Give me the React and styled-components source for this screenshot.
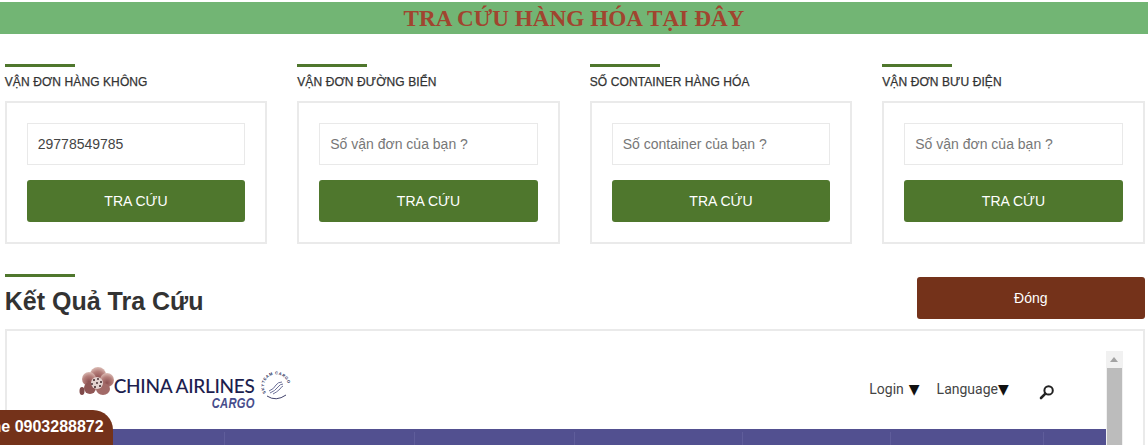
import styled, { createGlobalStyle } from "styled-components";

const GlobalStyle = createGlobalStyle`
  html, body {
    margin: 0;
    padding: 0;
    height: 445px;
    overflow: hidden;
    background: #fff;
    font-family: "Liberation Sans", Arial, sans-serif;
  }
  * { box-sizing: border-box; }
`;

const Page = styled.main`
  width: 1148px;
  height: 445px;
  padding-top: 2px;
  overflow: hidden;
`;

const Banner = styled.h2`
  margin: 0;
  height: 32px;
  background: #72b574;
  color: #a0452f;
  font: bold 23.2px/32px "Liberation Serif", serif;
  text-align: center;
`;

const Content = styled.div`
  padding: 30px 3.25px 0 4.75px;
`;

const SearchGrid = styled.section`
  display: grid;
  grid-template-columns: repeat(4, 1fr);
  column-gap: 30px;
`;

const Accent = styled.div`
  width: 70px;
  height: 3px;
  background: #4f772d;
`;

const ColumnLabel = styled.h4`
  margin: 7px 0 0;
  height: 27px;
  color: #333;
  font-size: 12px;
  font-weight: normal;
  line-height: 16px;
  letter-spacing: 0.1px;
  -webkit-text-stroke: 0.25px #333;
`;

const SearchBox = styled.div`
  height: 143px;
  border: 2px solid #eaeaea;
  padding: 20px 20px 0;
  display: flex;
  flex-direction: column;
  gap: 15px;
`;

const TrackInput = styled.input`
  height: 42px;
  width: 100%;
  border: 1px solid #e9e9e9;
  padding: 0 10px;
  font: 14px "Liberation Sans", Arial, sans-serif;
  color: #444;
  outline: none;
  &::placeholder { color: #777; opacity: 1; }
`;

const TrackButton = styled.button`
  height: 42px;
  width: 100%;
  border: 0;
  border-radius: 3px;
  background: #4f772d;
  color: #fff;
  font: 14px "Liberation Sans", Arial, sans-serif;
`;

const ResultHead = styled.div`
  display: flex;
  justify-content: space-between;
  margin-top: 30px;
  height: 55px;
`;

const ResultTitle = styled.h2`
  margin: 9px 0 0;
  color: #333;
  font-size: 25px;
  line-height: 30px;
  font-weight: bold;
`;

const CloseButton = styled.button`
  width: 228px;
  height: 42px;
  margin-top: 3px;
  border: 0;
  border-radius: 3px;
  background: #74321a;
  color: #fff;
  font: 14px "Liberation Sans", Arial, sans-serif;
`;

const ResultFrame = styled.div`
  height: 200px;
  border: 2px solid #eaeaea;
  padding: 20px 20px 0 0;
  display: flex;
`;

const FrameDoc = styled.div`
  flex: 1;
  min-width: 0;
`;

const DocHeader = styled.div`
  height: 78px;
  display: flex;
  justify-content: space-between;
  padding: 0 51px 0 72px;
`;

const Logo = styled.div`
  display: flex;
  align-items: flex-start;
  margin-top: 16px;
`;

const LogoText = styled.div`
  display: flex;
  flex-direction: column;
  align-items: flex-end;
  margin-left: -1px;
  padding-top: 9px;
`;

const AirlineName = styled.span`
  color: #1c1e4e;
  font: 500 19px/20px Lato, sans-serif;
  letter-spacing: -0.3px;
`;

const CargoName = styled.span`
  color: #474d8c;
  font: italic bold 14px/15px "Liberation Sans", Arial, sans-serif;
  letter-spacing: 0.3px;
  transform: scaleX(0.8);
  transform-origin: right center;
`;

const SealSlot = styled.div`
  margin: 4px 0 0 6px;
`;

const DocNav = styled.nav`
  display: flex;
  align-items: center;
  height: 36px;
  margin-top: 20px;
  color: #444;
  font: 14px Roboto, sans-serif;
`;

const NavItem = styled.span`
  margin-right: ${(p) => p.$gap}px;
`;

const Arrow = styled.span`
  color: #111;
  font: 14px "DejaVu Sans", sans-serif;
  margin-left: ${(p) => p.$gap}px;
`;

const GlassSlot = styled.span`
  display: flex;
  margin-top: 6px;
`;

const Menubar = styled.div`
  height: 20px;
  background: #525090;
  display: flex;
`;

const MenuCell = styled.div`
  width: ${(p) => p.$width}px;
  margin-top: 3px;
  border-right: 1px solid #5f5d9b;
  flex-shrink: 0;
`;

const Scrollbar = styled.div`
  width: 17px;
  background: #f1f1f1;
  display: flex;
  flex-direction: column;
  align-items: center;
`;

const ScrollUp = styled.div`
  width: 17px;
  height: 17px;
  display: flex;
  align-items: center;
  justify-content: center;
  &::before {
    content: "";
    border-left: 4px solid transparent;
    border-right: 4px solid transparent;
    border-bottom: 5px solid #a3a3a3;
  }
`;

const ScrollThumb = styled.div`
  width: 15px;
  flex: 1;
  background: #bcbcbc;
`;

const HotlineBadge = styled.div`
  position: fixed;
  left: -58px;
  bottom: 0;
  height: 35px;
  width: 171px;
  padding-left: 14px;
  border-radius: 0 20px 0 0;
  background: #74321a;
  color: #fff;
  font: bold 16px/33px "Liberation Sans", Arial, sans-serif;
  white-space: nowrap;
`;

const FlowerLogo = () => (
  <svg width="36" height="32" viewBox="0 0 36 32">
    <defs>
      <radialGradient id="petal" cx="50%" cy="70%" r="70%">
        <stop offset="0%" stopColor="#8c4f50" />
        <stop offset="60%" stopColor="#b57f7b" />
        <stop offset="100%" stopColor="#dcbdb6" />
      </radialGradient>
    </defs>
    <ellipse cx="19" cy="8" rx="8" ry="8" fill="url(#petal)" />
    <ellipse cx="10" cy="12" rx="7" ry="7" fill="url(#petal)" />
    <ellipse cx="28" cy="13" rx="7" ry="7" fill="url(#petal)" />
    <ellipse cx="11" cy="21" rx="6" ry="6" fill="#8f5655" />
    <ellipse cx="24" cy="22" rx="7" ry="6" fill="#a26a68" />
    <circle cx="18" cy="16" r="6" fill="#e3d2cf" />
    <g fill="#3a2226">
      <circle cx="15" cy="13" r="1" />
      <circle cx="19" cy="12" r="0.9" />
      <circle cx="22" cy="15" r="1" />
      <circle cx="21" cy="19" r="1" />
      <circle cx="16" cy="20" r="1" />
      <circle cx="13" cy="17" r="0.9" />
      <circle cx="18" cy="16" r="0.9" />
    </g>
    <ellipse cx="3" cy="24" rx="2.5" ry="4" fill="#7f4a4a" />
  </svg>
);

const SkyTeamSeal = () => (
  <svg width="30" height="32" viewBox="0 0 30 32">
    <defs>
      <path id="seal-ring" d="M5 22 A12 12 0 1 1 25 22" fill="none" />
    </defs>
    <text fontSize="4" fill="#2b2d5a" fontFamily="Liberation Sans, sans-serif" fontWeight="bold" letterSpacing="0.5">
      <textPath href="#seal-ring">SKYTEAM CARGO</textPath>
    </text>
    <path d="M6 25 Q15 31 25 24" fill="none" stroke="#2b2d5a" strokeWidth="0.9" />
    <g fill="none" stroke="#6c7098" strokeWidth="1">
      <path d="M8 20 Q13 18 15 14 Q17 11 21 11" />
      <path d="M9 22 Q14 20 17 16 Q19 13 22 13" />
      <path d="M12 23 Q16 21 19 18 Q20 16 22 15" />
    </g>
  </svg>
);

const SearchGlass = () => (
  <svg width="16" height="16" viewBox="0 0 16 16">
    <circle cx="9.6" cy="6.4" r="4.2" fill="none" stroke="#222" strokeWidth="2" />
    <path d="M6.4 9.6 L2 14" stroke="#222" strokeWidth="2.6" strokeLinecap="round" />
  </svg>
);

const lookups = [
  { label: "VẬN ĐƠN HÀNG KHÔNG", placeholder: "Số vận đơn của bạn ?", value: "29778549785" },
  { label: "VẬN ĐƠN ĐƯỜNG BIỂN", placeholder: "Số vận đơn của bạn ?" },
  { label: "SỐ CONTAINER HÀNG HÓA", placeholder: "Số container của bạn ?" },
  { label: "VẬN ĐƠN BƯU ĐIỆN", placeholder: "Số vận đơn của bạn ?" },
];

const menuWidths = [218, 190, 160, 168, 148, 153];

const App = () => {
  return (
    <>
      <GlobalStyle />
      <Page>
        <Banner>TRA CỨU HÀNG HÓA TẠI ĐÂY</Banner>
        <Content>
          <SearchGrid>
            {lookups.map((item) => (
              <div key={item.label}>
                <Accent />
                <ColumnLabel>{item.label}</ColumnLabel>
                <SearchBox>
                  <TrackInput placeholder={item.placeholder} defaultValue={item.value} />
                  <TrackButton>TRA CỨU</TrackButton>
                </SearchBox>
              </div>
            ))}
          </SearchGrid>
          <ResultHead>
            <div>
              <Accent />
              <ResultTitle>Kết Quả Tra Cứu</ResultTitle>
            </div>
            <CloseButton>Đóng</CloseButton>
          </ResultHead>
          <ResultFrame>
            <FrameDoc>
              <DocHeader>
                <Logo>
                  <FlowerLogo />
                  <LogoText>
                    <AirlineName>CHINA AIRLINES</AirlineName>
                    <CargoName>CARGO</CargoName>
                  </LogoText>
                  <SealSlot>
                    <SkyTeamSeal />
                  </SealSlot>
                </Logo>
                <DocNav>
                  <NavItem $gap={17}>Login<Arrow $gap={5}>▼</Arrow></NavItem>
                  <NavItem $gap={30}>Language<Arrow $gap={0}>▼</Arrow></NavItem>
                  <GlassSlot>
                    <SearchGlass />
                  </GlassSlot>
                </DocNav>
              </DocHeader>
              <Menubar>
                {menuWidths.map((w, i) => (
                  <MenuCell key={i} $width={w} />
                ))}
              </Menubar>
            </FrameDoc>
            <Scrollbar>
              <ScrollUp />
              <ScrollThumb />
            </Scrollbar>
          </ResultFrame>
        </Content>
        <HotlineBadge>Hotline 0903288872</HotlineBadge>
      </Page>
    </>
  );
};

export default App;
